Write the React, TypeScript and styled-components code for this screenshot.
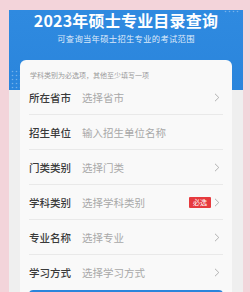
import React from "react";
import styled, { createGlobalStyle } from "styled-components";

const Global = createGlobalStyle`
  html, body { margin: 0; padding: 0; }
  body {
    background: #f3d4da;
    font-family: "Noto Sans CJK SC", "Noto Sans", sans-serif;
    width: 250px;
    height: 292px;
    overflow: hidden;
  }
`;

const Page = styled.div`
  width: 250px;
  height: 292px;
  padding: 10px 7px 0 9px;
  box-sizing: border-box;
  overflow: hidden;
  position: relative;
`;

const Panel = styled.div`
  width: 234px;
  height: 282px;
  background: #efefef;
  display: flex;
  flex-direction: column;
`;

const Header = styled.div`
  position: relative;
  height: 80px;
  flex: none;
  background: linear-gradient(180deg, #2f8ae0 0%, #2a85dc 100%);
  display: flex;
  flex-direction: column;
  align-items: center;
  padding-top: 2px;
  box-sizing: border-box;
`;

const Title = styled.div`
  color: #ffffff;
  font-size: 16px;
  font-weight: 700;
  line-height: 16px;
  letter-spacing: 0.2px;
`;

const Subtitle = styled.div`
  color: rgba(255, 255, 255, 0.85);
  font-size: 8.3px;
  line-height: 10px;
  margin-top: 5px;
  letter-spacing: 0.3px;
`;

const Dots = styled.svg`
  position: absolute;
`;

const Card = styled.div`
  margin: -30px 11px 0 11px;
  background: #f9f9f9;
  border-radius: 6px 6px 0 0;
  padding: 10px 9px 0 9px;
  display: flex;
  flex-direction: column;
  position: relative;
  flex: 1;
  min-height: 0;
`;

const Hint = styled.div`
  font-size: 7px;
  line-height: 10px;
  color: #9a9a9a;
  padding-left: 1px;
`;

const Row = styled.div<{ $last?: boolean }>`
  height: 35px;
  flex: none;
  display: flex;
  align-items: center;
  border-bottom: 1px solid ${(p) => (p.$last ? "transparent" : "#e9e9e9")};
  box-sizing: border-box;
`;

const Label = styled.div`
  width: 53px;
  font-size: 10.5px;
  font-weight: 500;
  color: #3a3a3a;
  flex: none;
`;

const Placeholder = styled.div`
  flex: 1;
  font-size: 10.5px;
  color: #a8a8a8;
`;

const Badge = styled.div`
  background: #e63a3e;
  color: #fff;
  font-size: 7px;
  width: 22px;
  height: 11px;
  line-height: 11px;
  text-align: center;
  border-radius: 1px;
  margin-right: 3px;
`;

const Chevron = styled.svg`
  width: 6px;
  height: 9px;
  margin-right: 3px;
  flex: none;
`;

const Button = styled.div`
  height: 20px;
  background: #2a85dc;
  border-radius: 4px 4px 0 0;
  flex: none;
`;

const Arrow = () => (
  <Chevron viewBox="0 0 6 9">
    <path d="M1 0.8 L4.8 4.5 L1 8.2" fill="none" stroke="#a9a9a9" strokeWidth="0.9" />
  </Chevron>
);

const DotGrid = ({ cols, rows, style }: { cols: number; rows: number; style: React.CSSProperties }) => (
  <Dots style={style} width={cols * 4} height={rows * 4}>
    {Array.from({ length: rows }).flatMap((_, r) =>
      Array.from({ length: cols }).map((__, c) => (
        <circle key={`${r}-${c}`} cx={c * 4 + 1.5} cy={r * 4 + 1.5} r={0.8} fill="rgba(255,255,255,0.35)" />
      ))
    )}
  </Dots>
);

const rows: { label: string; ph: string; arrow: boolean; badge?: boolean }[] = [
  { label: "所在省市", ph: "选择省市", arrow: true },
  { label: "招生单位", ph: "输入招生单位名称", arrow: false },
  { label: "门类类别", ph: "选择门类", arrow: true },
  { label: "学科类别", ph: "选择学科类别", arrow: true, badge: true },
  { label: "专业名称", ph: "选择专业", arrow: true },
  { label: "学习方式", ph: "选择学习方式", arrow: true },
];

export default function App() {
  return (
    <>
      <Global />
      <Page>
        <Panel>
          <Header>
            <DotGrid cols={3} rows={5} style={{ left: 2, top: 60 }} />
            <DotGrid cols={4} rows={1} style={{ right: 3, top: 0 }} />
            <Title>2023年硕士专业目录查询</Title>
            <Subtitle>可查询当年硕士招生专业的考试范围</Subtitle>
          </Header>
          <Card>
            <Hint>学科类别为必选项，其他至少填写一项</Hint>
            {rows.map((r, i) => (
              <Row key={r.label} $last={i === rows.length - 1}>
                <Label>{r.label}</Label>
                <Placeholder>{r.ph}</Placeholder>
                {r.badge && <Badge>必选</Badge>}
                {r.arrow && <Arrow />}
              </Row>
            ))}
            <Button />
          </Card>
        </Panel>
      </Page>
    </>
  );
}
